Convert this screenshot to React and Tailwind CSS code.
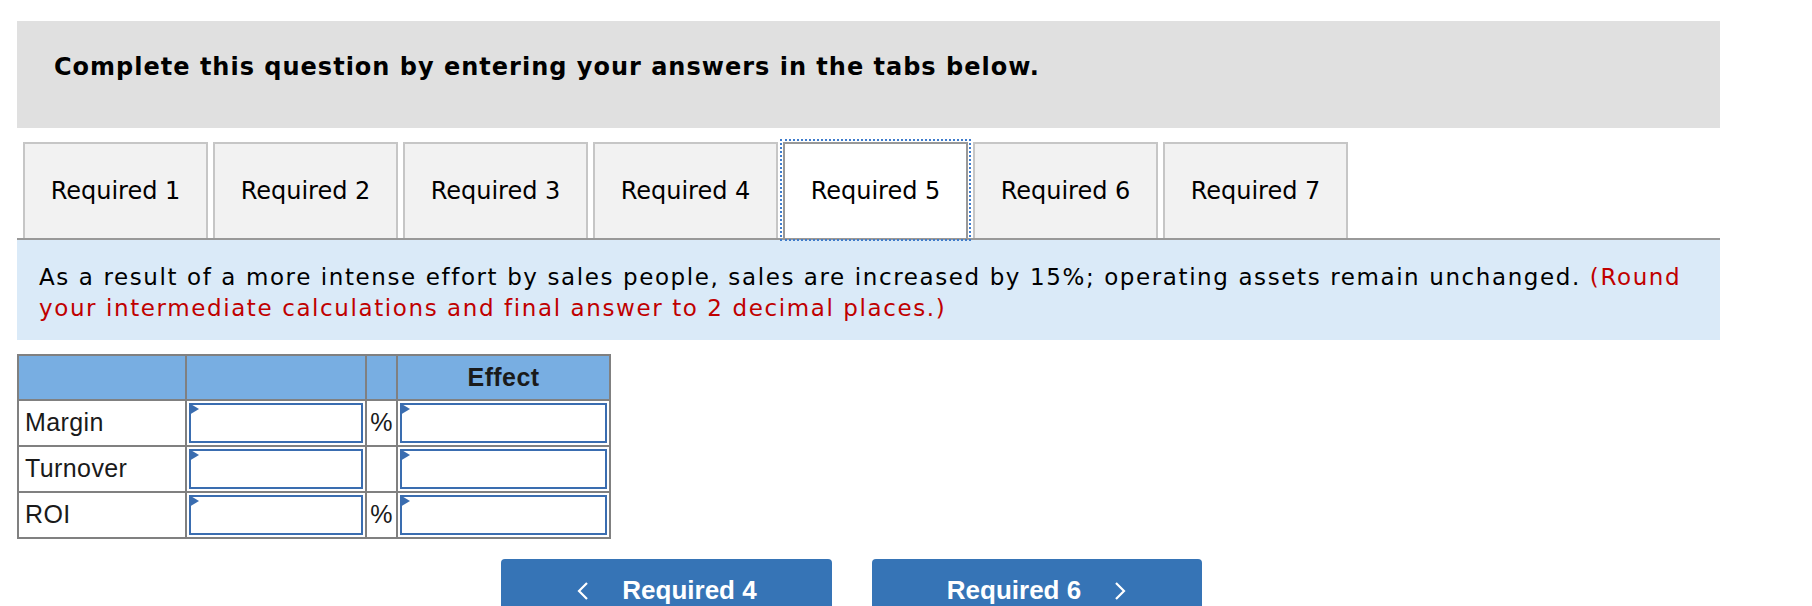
import React from "react";

const tabs = ["Required 1", "Required 2", "Required 3", "Required 4", "Required 5", "Required 6", "Required 7"];

const rows = [
  { label: "Margin", unit: "%" },
  { label: "Turnover", unit: "" },
  { label: "ROI", unit: "%" },
];

function InputCell() {
  return (
    <div className="relative h-full p-[2px]">
      <div className="h-full w-full border-2 border-[#3a6db0] bg-white" />
      <span className="absolute left-[2px] top-[2px] h-0 w-0 border-y-[6px] border-l-[10px] border-y-transparent border-l-[#3a6db0]" />
    </div>
  );
}

function Tab({ label, active }) {
  if (active) {
    return (
      <div className="outline-2 outline-dotted outline-[#3f7ccc] outline-offset-[1px] w-[185px] h-[96px] flex items-center justify-center bg-white border-2 border-b-0 border-[#999]">
        {label}
      </div>
    );
  }
  return (
    <div className="w-[185px] h-[96px] flex items-center justify-center bg-[#f2f2f2] border-2 border-b-0 border-[#c6c6c6]">
      {label}
    </div>
  );
}

function Chevron({ dir }) {
  return (
    <svg width="13" height="20" viewBox="0 0 13 20" className="shrink-0">
      <polyline
        points={dir === "left" ? "11,2 3,10 11,18" : "2,2 10,10 2,18"}
        fill="none"
        stroke="white"
        strokeWidth="2.2"
      />
    </svg>
  );
}

export default function App() {
  return (
    <div className="w-[1812px] h-[606px] overflow-hidden bg-white pl-[17px] pt-[21px]">
      <div className="w-[1703px]">
        <div className="h-[107px] bg-[#e0e0e0] pl-[37px] pt-[32px] font-['DejaVu_Sans',sans-serif] text-[24px] leading-[28px] tracking-[1px] font-bold text-black">
          Complete this question by entering your answers in the tabs below.
        </div>

        <div className="mt-[14px] pl-[6px] flex gap-[5px] font-['DejaVu_Sans',sans-serif] text-[24px] text-black">
          {tabs.map((t) => (
            <Tab key={t} label={t} active={t === "Required 5"} />
          ))}
        </div>

        <div className="border-t-2 border-[#999] bg-[#daeaf8] h-[102px] pl-[22px] pr-[8px] pt-[22px] font-['DejaVu_Sans',sans-serif] text-[23px] leading-[31px] tracking-[1.6px] text-black">
          As a result of a more intense effort by sales people, sales are increased by 15%; operating assets remain unchanged.{" "}
          <span className="text-[#c00000]">(Round your intermediate calculations and final answer to 2 decimal places.)</span>
        </div>

        <table className="mt-[14px] border-collapse border-2 border-[#808080] font-['Liberation_Sans',Arial,sans-serif] text-[25px] tracking-[0.4px] text-[#1a1a1a]">
          <thead>
            <tr className="h-[45px] bg-[#78aee2]">
              <th className="w-[168px] border-2 border-[#808080]"></th>
              <th className="w-[180px] border-2 border-[#808080]"></th>
              <th className="w-[31px] border-2 border-[#808080]"></th>
              <th className="w-[213px] border-2 border-[#808080] font-bold text-center">Effect</th>
            </tr>
          </thead>
          <tbody>
            {rows.map((r) => (
              <tr key={r.label} className="h-[46px]">
                <td className="border-2 border-[#808080] pl-[6px] align-middle">{r.label}</td>
                <td className="border-2 border-[#808080] p-0 h-[46px]">
                  <InputCell />
                </td>
                <td className="border-2 border-[#808080] text-center px-0">{r.unit}</td>
                <td className="border-2 border-[#808080] p-0 h-[46px]">
                  <InputCell />
                </td>
              </tr>
            ))}
          </tbody>
        </table>

        <div className="mt-[20px] flex pl-[484px] gap-[40px] font-['Liberation_Sans',Arial,sans-serif] text-[26px] font-bold text-white">
          <button className="w-[331px] h-[50px] rounded-t-[4px] bg-[#3674b6] flex items-start justify-center pt-[17px] leading-[28px]">
            <span className="mr-[33px] mt-[5px]"><Chevron dir="left" /></span>
            <span>Required 4</span>
          </button>
          <button className="w-[330px] h-[50px] rounded-t-[4px] bg-[#3674b6] flex items-start justify-center pt-[17px] leading-[28px]">
            <span>Required 6</span>
            <span className="ml-[33px] mt-[5px]"><Chevron dir="right" /></span>
          </button>
        </div>
      </div>
    </div>
  );
}
